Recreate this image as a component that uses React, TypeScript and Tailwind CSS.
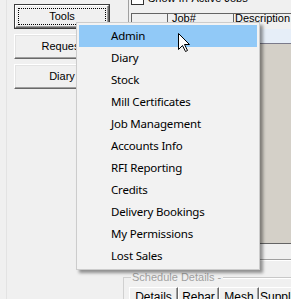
import React from "react";

const items = [
  "Admin",
  "Diary",
  "Stock",
  "Mill Certificates",
  "Job Management",
  "Accounts Info",
  "RFI Reporting",
  "Credits",
  "Delivery Bookings",
  "My Permissions",
  "Lost Sales",
];

function WinButton({ label, focused }: { label: string; focused?: boolean }) {
  if (focused) {
    return (
      <div className="w-[96px] h-[25px] border border-[#3c3c3c]">
        <div className="h-full w-full border-t border-l border-t-white border-l-white border-b border-r border-b-[#696969] border-r-[#696969] shadow-[inset_-1px_-1px_0_#a0a0a0] p-[2px]">
          <div className="h-full w-full border border-dotted border-black flex items-center justify-center leading-none">
            {label}
          </div>
        </div>
      </div>
    );
  }
  return (
    <div className="w-[96px] h-[25px] border-t border-l border-t-white border-l-white border-b border-r border-b-[#696969] border-r-[#696969] shadow-[inset_-1px_-1px_0_#a0a0a0,inset_1px_1px_0_#e3e3e3] flex items-center justify-center leading-none">
      {label}
    </div>
  );
}

export default function App() {
  return (
    <div className="relative w-[291px] h-[299px] overflow-hidden bg-[#f0f0f0] flex font-['Liberation_Sans',Arial,sans-serif] text-[11px] text-black">
      {/* left column */}
      <div className="w-[123px] shrink-0 pl-[6px]">
        <div className="h-full border-l border-[#e3e3e3] pl-[7px] pt-[4px] flex flex-col gap-[5px]">
          <WinButton label="Tools" focused />
          <WinButton label="Request" />
          <WinButton label="Diary" />
        </div>
      </div>

      {/* right column */}
      <div className="flex-1 min-w-0 flex flex-col">
        <div className="ml-[5px] h-[260px] shrink-0 border-l border-b border-[#a0a0a0] shadow-[0_1px_0_#ffffff] pl-[2px] flex flex-col">
          <div className="-mt-[8px] h-[13px] flex items-center gap-[4px] shrink-0">
            <div className="w-[13px] h-[13px] bg-white border border-[#333]" />
            <span className="whitespace-nowrap leading-[13px]">Show In-Active Jobs</span>
          </div>
          <div className="mt-[8px] w-[170px] h-[231px] shrink-0 border border-r-0 border-[#646464] flex flex-col">
            <div className="h-[15px] flex shrink-0 overflow-hidden">
              <div className="w-[36px] border-r border-[#646464]" />
              <div className="w-[66px] border-r border-[#646464] pl-[4px] leading-[11px] -mt-[1px]">Job#</div>
              <div className="pl-[1px] leading-[11px] -mt-[1px] whitespace-nowrap">Description</div>
            </div>
            <div className="h-[15px] shrink-0 bg-[#e6eef8] border-b border-[#7a7a8a]" />
            <div className="flex-1 bg-[#d4d0c8]" />
          </div>
        </div>

        {/* group box */}
        <div className="mt-[12px] flex flex-col flex-1">
          <div className="h-[11px] flex items-center shrink-0">
            <div className="w-[8px] self-stretch mt-[5px] border-t border-l border-[#d0d0d0]" />
            <span className="pl-[1px] text-[#a0a0a0] whitespace-nowrap leading-[11px]">Schedule Details -</span>
            <div className="flex-1 h-px bg-[#c8c8c8] ml-[2px] shadow-[0_1px_0_#ffffff]" />
          </div>
          <div className="flex-1 border-l border-[#d0d0d0] pl-[5px] pt-[4px] flex">
            {[
              ["Details", "w-[49px]"],
              ["Rebar", "w-[41px]"],
              ["Mesh", "w-[40px]"],
              ["Supplier", "w-[44px]"],
            ].map(([t, w]) => (
              <div
                key={t}
                className={`${w} h-[16px] shrink-0 border-t border-l border-white border-r border-r-[#696969] shadow-[inset_-1px_0_0_#a0a0a0] pt-[3px] text-center text-[12px] leading-[12px] overflow-hidden whitespace-nowrap`}
              >
                {t}
              </div>
            ))}
          </div>
        </div>
      </div>

      {/* context menu */}
      <div className="absolute left-[76px] top-[22px] w-[184px] border border-[#cccccc] bg-[#f2f2f2] p-[2px] shadow-[3px_3px_3px_rgba(0,0,0,0.4)] font-['Noto_Sans',sans-serif] text-[11.5px] tracking-[-0.2px]">
        {items.map((it, i) => (
          <div
            key={it}
            className={`h-[22px] pl-[32px] flex items-center whitespace-nowrap ${i === 0 ? "bg-[#91c9f7]" : ""}`}
          >
            {it}
          </div>
        ))}
      </div>

      {/* mouse cursor */}
      <svg className="absolute left-[178px] top-[33px]" width="13" height="21" viewBox="0 0 13 21">
        <path
          d="M0.5 0.5 L0.5 16.5 L4.5 12.5 L7.5 18.5 L9.5 17.5 L6.5 11.5 L11.5 11.5 Z"
          fill="#ffffff"
          stroke="#000000"
          strokeWidth="1"
          strokeLinejoin="miter"
        />
      </svg>
    </div>
  );
}
